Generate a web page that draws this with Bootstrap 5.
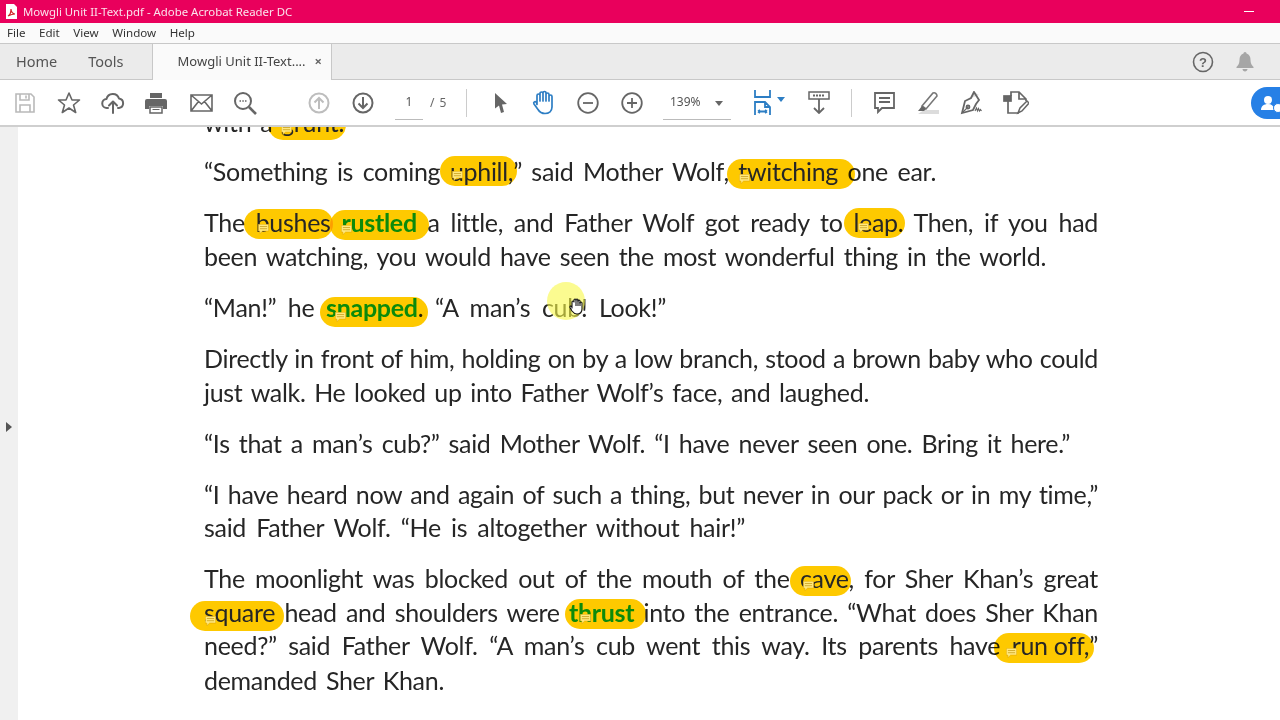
<!DOCTYPE html>
<html lang="en"><head><meta charset="utf-8"><title>Mowgli Unit II-Text.pdf - Adobe Acrobat Reader DC</title>
<link href="https://cdn.jsdelivr.net/npm/bootstrap@5.3.0/dist/css/bootstrap.min.css" rel="stylesheet">
<style>
html,body{height:720px;overflow:hidden;background:#fff}
body{font-family:"Noto Sans","Open Sans",sans-serif;position:relative}
.ttl{height:23px;background:#e9005c;color:#fbe3ec;font-size:11.4px;padding-left:5px}
.ttl svg{margin-right:5px}
.mnb{height:21px;background:#fafafa;border-bottom:1px solid #c8c8c8;font-size:11.6px;color:#333;padding-left:7px;gap:13.5px}
.tbs{height:36px;background:#ebebeb;border-bottom:1px solid #c8c8c8;color:#555;font-size:14.5px}
.tbl{padding:0 15px 0 16px}
.tba{width:180px;height:36px;margin-left:13px;background:#fafafa;border:1px solid #c8c8c8;border-width:0 1px;color:#444;font-size:13px;padding-left:25px}
.tbx{font-size:13px;margin-left:9px;font-weight:700;color:#666}
.tlb{height:47px;background:#fff;border-bottom:2px solid #cfcfcf;padding-left:3px;position:relative}
.tib{width:44px;height:46px;flex:none;display:flex;align-items:center;justify-content:center}
.pgb{width:28px;margin-left:10px;height:34px;border-bottom:1px solid #bbb;text-align:center;font-size:12px;color:#555;line-height:32px}
.pgt{font-size:12px;color:#666;margin-left:7px;width:36px;word-spacing:2px}
.vsp{width:1px;height:28px;background:#ccc;flex:none}
.zmb{width:68px;height:34px;border-bottom:1px solid #bbb;font-size:12px;color:#555;line-height:32px;padding-left:7px;position:relative;flex:none;margin-left:9px}
.car{display:inline-block;border:4px solid transparent;border-top:5px solid #666;border-bottom:0}
.usr{position:absolute;left:1251px;top:7px;width:60px;height:32px;border-radius:16px;background:#2680e6}
.dcv{height:593px;overflow:hidden;position:relative}
.sdb{width:18px;background:#f0f0f0;flex:none;position:relative}
.sdb i{position:absolute;left:6px;top:295px;border:5px solid transparent;border-left:6px solid #555;border-right:0}
.pgc{font-family:Lato,"Liberation Sans",sans-serif;font-size:25px;color:#262626;margin-left:186px;margin-top:-21px;letter-spacing:-.3px}
.pgp{margin:0 0 17.8px}
.pgp.fst{margin-bottom:15.8px}
.lnx{height:33.4px;line-height:33.4px;white-space:nowrap;text-align:justify;text-align-last:justify}
.lnl{margin-top:1.5px}
.hlw{position:relative;z-index:0;display:inline-block;text-align-last:auto;line-height:30px;mix-blend-mode:multiply}
.hlw::before{content:"";position:absolute;z-index:-1;top:var(--t);height:30px;left:var(--l);right:var(--r);background:#fec900;border-radius:15px}
.hlw.grn{color:#0b8a0b;font-weight:700}
.cmt{position:absolute;left:var(--c);top:calc(var(--t) + 15px);width:11px;height:10px}
.wgr{--l:-13px;--r:-2px;--t:3px;--c:0px}
.wup{--l:-10px;--r:-4px;--t:0px;--c:2px}
.wtw{--l:-11px;--r:-17px;--t:3px;--c:1px}
.wbu{--l:-12px;--r:-2px;--t:2px;--c:2px}
.wru{--l:-11px;--r:-12px;--t:3px;--c:0px}
.wle{--l:-9px;--r:-7px;--t:1px;--c:5px}
.wsn{--l:-6px;--r:-10px;--t:5px;--c:9px}
.wca{--l:-10px;--r:-2px;--t:3px;--c:3px}
.wsq{--l:-14px;--r:-9px;--t:4px;--c:1px}
.wth{--l:-4px;--r:-12px;--t:2px;--c:11px}
.wrn{--l:-18px;--r:-5px;--t:3px;--c:-6px}
.spt{position:absolute;left:547px;top:155px;width:38px;height:38px;border-radius:50%;background:rgba(248,248,70,.6)}
.hnd{position:absolute;left:569px;top:171px}
</style></head>
<body>
<svg width="0" height="0" class="position-absolute"><defs><symbol id="cm" viewBox="0 0 12 11"><path d="M.3.3h11.400v7.500H5L2 10.700V7.800H.3z" fill="#ffe97f" stroke="#e0a400" stroke-width=".6"/><path d="M2 2.800h8M2 5.200h8" stroke="#b98a00" stroke-width=".7"/></symbol></defs></svg>
<div class="ttl d-flex align-items-center">
<svg width="13" height="15" viewBox="0 0 13 15"><path d="M1 0h8l3 3v12H1z" fill="#fff"/><path d="M3 12c2-1 3-4 3-7 0 3 2 5 4 5-3 0-5 1-7 2z" fill="none" stroke="#d2232a" stroke-width="1.200"/></svg>
<span>Mowgli Unit II-Text.pdf - Adobe Acrobat Reader DC</span>
<svg class="ms-auto" style="margin-right:25px" width="11" height="2"><rect width="10" height="1" fill="#fff"/></svg>
</div>
<div class="mnb d-flex align-items-center"><span>File</span><span>Edit</span><span>View</span><span>Window</span><span>Help</span></div>
<div class="tbs d-flex align-items-center">
<span class="tbl">Home</span><span class="tbl">Tools</span>
<div class="tba d-flex align-items-center"><span>Mowgli Unit II-Text....</span><span class="tbx">×</span></div>
<svg class="ms-auto" style="margin-right:21px" width="22" height="22" viewBox="0 0 22 22"><circle cx="11" cy="11" r="9.500" fill="none" stroke="#666" stroke-width="1.600"/><text x="11" y="15.500" text-anchor="middle" font-size="13" font-weight="700" fill="#666" font-family="Liberation Sans">?</text></svg>
<svg style="margin-right:25px" width="20" height="21" viewBox="0 0 20 21"><path d="M10 1c1 0 1.500.8 1.500 1.600C14.500 3.500 15.500 6 15.500 9c0 3 1 5 3 7v1h-17v-1c2-2 3-4 3-7 0-3 1-5.500 4-6.400C8.500 1.800 9 1 10 1zM7.500 18h5c0 1.500-1.200 2.500-2.500 2.500S7.500 19.500 7.500 18z" fill="#a6a6a6"/></svg>
</div>
<div class="tlb d-flex align-items-center">
<span class="tib"><svg width="22" height="22" viewBox="0 0 22 22" fill="none" stroke="#b9b9b9" stroke-width="1.600"><path d="M2 2h15l3 3v15H2z"/><path d="M6 2v6h9V2M12 3.500v3M6 20v-7h10v7"/></svg></span>
<span class="tib"><svg width="24" height="24" viewBox="0 0 24 24" fill="none" stroke="#666" stroke-width="1.600" stroke-linejoin="round"><path d="M12 2l3 7h7.500l-6 5 2.200 7.500L12 17l-6.700 4.500L7.500 14l-6-5H9z"/></svg></span>
<span class="tib"><svg width="24" height="22" viewBox="0 0 24 22" fill="none" stroke="#666" stroke-width="2" stroke-linecap="round" stroke-linejoin="round"><path d="M7 16H6a4.500 4.500 0 0 1-.5-9A6.500 6.500 0 0 1 18 6.500 4.800 4.800 0 0 1 18 16h-1M12 21v-11M8 13.500l4-4 4 4"/></svg></span>
<span class="tib" style="margin-left:-1px;margin-right:1px"><svg width="24" height="22" viewBox="0 0 24 22"><path d="M6 1h12v5H6zM3 7h18a2 2 0 0 1 2 2v8h-4v-3H5v3H1V9a2 2 0 0 1 2-2z" fill="#666"/><path d="M6 15h12v6H6z" fill="#fff" stroke="#666" stroke-width="1.500"/><path d="M8.500 17.500h7" stroke="#666"/></svg></span>
<span class="tib"><svg width="23" height="18" viewBox="0 0 23 18" fill="none" stroke="#666" stroke-width="1.600"><path d="M1 1h21v16H1zM1 1l10.500 9L22 1M1 17l7.500-9.500M22 17l-7.500-9.500"/></svg></span>
<span class="tib"><svg width="24" height="24" viewBox="0 0 24 24" fill="none" stroke="#666" stroke-width="2"><circle cx="10" cy="10" r="8"/><path d="M16 16l7 7" stroke-width="2.600"/><path d="M6.500 10h1.500M9.300 10h1.500M12 10h1.500" stroke-width="1.500"/></svg></span>
<span style="width:30px" class="flex-none"></span>
<span class="tib"><svg width="22" height="22" viewBox="0 0 22 22" fill="none" stroke="#bdbdbd" stroke-width="2"><circle cx="11" cy="11" r="9.500"/><path d="M11 17V6M6.500 10.500L11 6l4.500 4.500"/></svg></span>
<span class="tib"><svg width="22" height="22" viewBox="0 0 22 22" fill="none" stroke="#666" stroke-width="2"><circle cx="11" cy="11" r="9.500"/><path d="M11 5v11M6.500 11.500L11 16l4.500-4.500"/></svg></span>
<span class="pgb">1</span><span class="pgt">/ 5</span>
<span class="vsp"></span>
<span class="tib" style="margin-left:12px"><svg width="14" height="20" viewBox="0 0 14 20"><path d="M1 0l12 11-5 .5 2 7.500-3 1-2-7.500-4 3z" fill="#666"/></svg></span>
<span class="tib" style="margin-left:-1px"><svg width="24" height="25" viewBox="0 0 24 25" fill="none" stroke="#2d7ec4" stroke-width="1.700" stroke-linecap="round" stroke-linejoin="round"><path d="M5 14V5.500a1.500 1.500 0 0 1 3 0V11M8 11V3.500a1.500 1.500 0 0 1 3 0V11M11 11V3a1.500 1.500 0 0 1 3 0v8M14 11V4.500a1.500 1.500 0 0 1 3 0V11M17 11V6.500a1.500 1.500 0 0 1 3 0V17c0 4-3 6.500-7 6.500-3.500 0-5.500-1.500-7-4l-4-5.500c-1-2 1-3 2.500-1.500L5 14.500"/></svg></span>
<span class="tib"><svg width="22" height="22" viewBox="0 0 22 22" fill="none" stroke="#666" stroke-width="1.800"><circle cx="11" cy="11" r="9.800"/><path d="M6 11h10"/></svg></span>
<span class="tib"><svg width="22" height="22" viewBox="0 0 22 22" fill="none" stroke="#666" stroke-width="1.800"><circle cx="11" cy="11" r="9.800"/><path d="M6 11h10M11 6v10"/></svg></span>
<span class="zmb">139%<i class="car" style="position:absolute;left:52px;top:15px"></i></span>
<span class="tib" style="margin-left:11px;width:42px"><svg width="20" height="25" viewBox="0 0 20 25" fill="none" stroke="#2d7ec4" stroke-width="1.800"><path d="M2 0v7h15V0M2 25V12h10l5 5v8M12 12v5h5M5 21.500h9M5 21.500l2-1.500M5 21.500l2 1.500M14 21.500l-2-1.500M14 21.500l-2 1.500"/></svg></span>
<i class="car" style="border-top-color:#2d7ec4;margin-left:-7px;margin-bottom:6px"></i>
<span class="tib" style="margin-left:12px"><svg width="22" height="23" viewBox="0 0 22 23" fill="none"><rect x="1" y="1" width="20" height="7" fill="#fff" stroke="#666" stroke-width="1.500"/><path d="M5 4.500h12" stroke="#666" stroke-width="2" stroke-dasharray="2 1"/><path d="M11 8v14M6 17l5 5 5-5" stroke="#666" stroke-width="1.800"/></svg></span>
<span class="vsp" style="margin-left:10px"></span>
<span class="tib" style="margin-left:10px"><svg width="21" height="22" viewBox="0 0 21 22" fill="none" stroke="#666" stroke-width="1.800"><path d="M1 1h19v15H8l-4 4v-4H1zM5 6h11M5 10h11" /></svg></span>
<span class="tib"><svg width="24" height="24" viewBox="0 0 24 24" fill="none"><path d="M2 23h21v-4H8z" fill="#dcdcdc"/><path d="M6 15L17 2c2-1 4 1 4 3L10 18z" stroke="#777" stroke-width="1.600"/><path d="M6 15l4 3-2 2H2z" fill="#666"/></svg></span>
<span class="tib"><svg width="24" height="24" viewBox="0 0 24 24" fill="none" stroke="#666" stroke-width="1.800"><path d="M19 4l-5-3-3 6" fill="#ddd" stroke="none"/><path d="M14 1l-3 6-6 3-3 12 11-3 3-6 3-4z"/><circle cx="8" cy="16" r="1.500"/><path d="M3 21l5-5M15 20l1.500-3 1 3 1-2.500 1 2.500 1-1.500 1 1.500" stroke-width="1.100"/></svg></span>
<span class="tib"><svg width="26" height="24" viewBox="0 0 26 24" fill="none" stroke="#666" stroke-width="1.700"><path d="M8 5V1h8l7 7v2M16 1v7h7M5 10v12h11"/><rect x="1" y="5" width="7" height="5" fill="#666"/><path d="M15 22l2-5 7-7 2 2-7 8z" stroke-width="1.500"/></svg></span>
<span class="usr"><svg class="d-block" style="margin:7px 0 0 9px" width="22" height="20" viewBox="0 0 22 20" fill="#fff"><circle cx="8" cy="6" r="4"/><path d="M1 16c0-4 3-6 7-6s6 2 6 6z"/><circle cx="18" cy="14" r="4.500" stroke="#2680e6"/></svg></span>
</div>
<div class="dcv d-flex">
<div class="sdb"><i></i></div>
<div class="pgc flex-grow-1">
<div class="pgp fst"><div class="lnx" style="width:140px">with a <span class="hlw wgr">grunt.<svg class="cmt"><use href="#cm"/></svg></span></div></div>
<div class="pgp"><div class="lnx" style="width:732px">“Something is coming <span class="hlw wup">uphill,<svg class="cmt"><use href="#cm"/></svg></span>” said Mother Wolf, <span class="hlw wtw">twitching<svg class="cmt"><use href="#cm"/></svg></span> one ear.</div></div>
<div class="pgp"><div class="lnx" style="width:894px">The <span class="hlw wbu">bushes<svg class="cmt"><use href="#cm"/></svg></span> <span class="hlw grn wru">rustled<svg class="cmt"><use href="#cm"/></svg></span> a little, and Father Wolf got ready to <span class="hlw wle">leap<svg class="cmt"><use href="#cm"/></svg></span>. Then, if you had</div>
<div class="lnx" style="width:842px">been watching, you would have seen the most wonderful thing in the world.</div></div>
<div class="pgp"><div class="lnx" style="width:462px">“Man!” he <span class="hlw grn wsn">snapped<svg class="cmt"><use href="#cm"/></svg></span>. “A man’s cub! Look!”</div></div>
<div class="pgp"><div class="lnx" style="width:894px">Directly in front of him, holding on by a low branch, stood a brown baby who could</div>
<div class="lnx" style="width:665px">just walk. He looked up into Father Wolf’s face, and laughed.</div></div>
<div class="pgp"><div class="lnx" style="width:866px">“Is that a man’s cub?” said Mother Wolf. “I have never seen one. Bring it here.”</div></div>
<div class="pgp"><div class="lnx" style="width:894px">“I have heard now and again of such a thing, but never in our pack or in my time,”</div>
<div class="lnx" style="width:541px">said Father Wolf. “He is altogether without hair!”</div></div>
<div class="pgp"><div class="lnx" style="width:894px">The moonlight was blocked out of the mouth of the <span class="hlw wca">cave<svg class="cmt"><use href="#cm"/></svg></span>, for Sher Khan’s great</div>
<div class="lnx" style="width:894px"><span class="hlw wsq">square<svg class="cmt"><use href="#cm"/></svg></span> head and shoulders were <span class="hlw grn wth">thrust<svg class="cmt"><use href="#cm"/></svg></span> into the entrance. “What does Sher Khan</div>
<div class="lnx" style="width:894px">need?” said Father Wolf. “A man’s cub went this way. Its parents have <span class="hlw wrn">run off,<svg class="cmt"><use href="#cm"/></svg></span>”</div>
<div class="lnx lnl" style="width:240px">demanded Sher Khan.</div></div>
</div>
<div class="spt"></div>
<svg class="hnd" width="16" height="18" viewBox="0 0 16 18" fill="#fff" stroke="#111" stroke-width="1.100" stroke-linejoin="round"><path d="M3 10V4a1 1 0 0 1 2 0V2a1 1 0 0 1 2 0v0a1 1 0 0 1 2 0v1a1 1 0 0 1 2 0v2a1 1 0 0 1 2 0v6c0 3-2 5-5 5-2.500 0-3.500-1-5-3L1 9.500c-.5-1.500 1-2 2-.5z"/><path d="M7 2v6M9 2v6M11 4v4" fill="none"/></svg>
</div>
</body></html>
